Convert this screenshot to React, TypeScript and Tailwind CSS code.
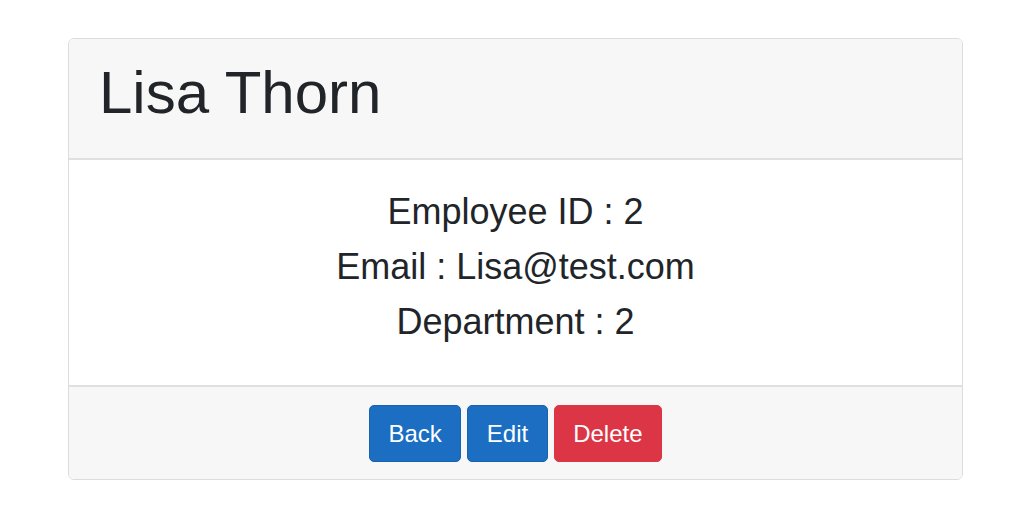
import React from 'react'

export default function App() {
  const details = [
    { label: 'Employee ID', value: '2' },
    { label: 'Email', value: 'Lisa@test.com' },
    { label: 'Department', value: '2' }
  ]

  return (
    <div className="min-h-[518px] bg-white pt-[38px] font-['Liberation_Sans',Arial,sans-serif] text-[#212529]">
      <div className="ml-[68px] w-[895px] rounded-[6px] border border-[#dcdcdc] bg-white overflow-hidden">
        {/* Header */}
        <div className="border-b-2 border-[#e0e0e0] bg-[#f7f7f7] px-[30px] pt-[18px] pb-[17px]">
          <h1 className="mb-[12px] text-[60px] leading-[72px]">Lisa Thorn</h1>
        </div>

        {/* Body */}
        <div className="p-[30px] text-center">
          {details.map((d) => (
            <h4 key={d.label} className="mb-[12px] text-[36px] leading-[43px]">
              {d.label} : {d.value}
            </h4>
          ))}
        </div>

        {/* Footer */}
        <div className="flex justify-center gap-[6px] border-t-2 border-[#e0e0e0] bg-[#f7f7f7] px-[30px] pt-[18px] pb-[17px]">
          <button className="rounded-[5px] border border-[#1861ac] bg-[#1b6ec2] px-[18px] py-[9.5px] text-[24px] leading-[36px] text-white">
            Back
          </button>
          <button className="rounded-[5px] border border-[#1861ac] bg-[#1b6ec2] px-[19px] py-[9.5px] text-[24px] leading-[36px] text-white">
            Edit
          </button>
          <button className="rounded-[5px] border border-[#dc3545] bg-[#dc3545] px-[18px] py-[9.5px] text-[24px] leading-[36px] text-white">
            Delete
          </button>
        </div>
      </div>
    </div>
  )
}
